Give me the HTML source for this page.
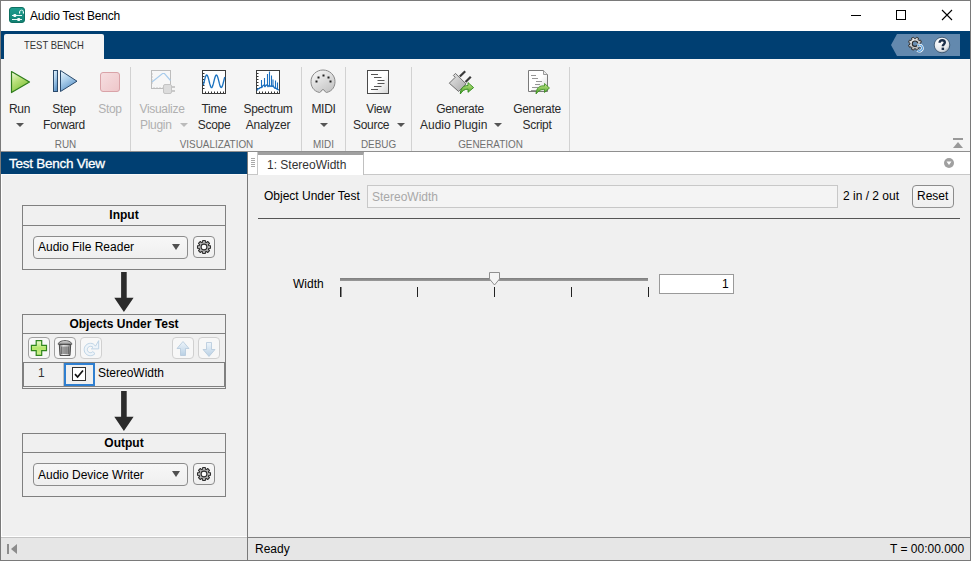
<!DOCTYPE html>
<html><head><meta charset="utf-8">
<style>
html,body{margin:0;padding:0;}
body{width:971px;height:561px;overflow:hidden;position:relative;background:#f0f0f0;font-family:"Liberation Sans",sans-serif;color:#000;}
.a{position:absolute;}
.t{position:absolute;white-space:nowrap;font-size:12px;line-height:14px;}
.c{text-align:center;}
.rb{font-size:12px;letter-spacing:-0.3px;color:#2a2a2a;}
.gl{font-size:11px;transform:scaleX(0.9);transform-origin:50% 0;color:#707070;}
.dis{color:#b0b0b0;}
.sep{position:absolute;top:67px;width:1px;height:84px;background:#d2d2d2;}
.dd{position:absolute;width:0;height:0;border-left:4px solid transparent;border-right:4px solid transparent;border-top:4.5px solid #555;}
</style></head>
<body>
<!-- window frame -->
<div class="a" style="left:0;top:0;width:971px;height:31px;background:#fff;"></div>
<!-- title -->
<div class="a" style="left:9px;top:7px;width:16px;height:16px;">
<svg width="16" height="16" viewBox="0 0 16 16"><defs><linearGradient id="tg" x1="0" y1="0" x2="0" y2="1"><stop offset="0" stop-color="#1e9e8f"/><stop offset="1" stop-color="#128173"/></linearGradient></defs>
<rect x="0.5" y="0.5" width="15" height="15" rx="2.5" fill="url(#tg)" stroke="#0f7062"/>
<path d="M3 8.5H13M3 12.5H13" stroke="#e8f7f4" stroke-width="1"/>
<rect x="4.3" y="7" width="3" height="3" rx="1" fill="#f2fbf9"/><rect x="8.2" y="11" width="3" height="3" rx="1" fill="#f2fbf9"/>
<path d="M10.6 6V5a1.9 1.9 0 0 1 3.8 0V6" stroke="#e8f7f4" stroke-width="0.9" fill="none"/>
<rect x="10" y="4.8" width="1.1" height="1.8" fill="#f2fbf9"/><rect x="13.9" y="4.8" width="1.1" height="1.8" fill="#f2fbf9"/>
</svg></div>
<div class="t" style="left:30px;top:9px;font-size:12px;letter-spacing:-0.2px;color:#000;">Audio Test Bench</div>
<!-- window controls -->
<div class="a" style="left:851px;top:15px;width:10px;height:1px;background:#000;"></div>
<div class="a" style="left:896px;top:10px;width:8px;height:8px;border:1px solid #000;"></div>
<svg class="a" style="left:941px;top:9px;" width="12" height="12" viewBox="0 0 12 12"><path d="M1 1L11 11M11 1L1 11" stroke="#000" stroke-width="1.1"/></svg>

<!-- toolstrip tab band -->
<div class="a" style="left:0;top:31px;width:971px;height:28px;background:#003f72;"></div>
<div class="a" style="left:4px;top:34px;width:100px;height:25px;background:#f5f5f5;border-radius:2px 2px 0 0;"></div>
<div class="t" style="left:24px;top:38px;font-size:11px;color:#333;line-height:14px;transform:scaleX(0.86);transform-origin:0 0;">TEST BENCH</div>
<!-- quick access -->
<svg class="a" style="left:890px;top:34px;" width="71" height="22" viewBox="0 0 71 22"><path d="M7 0H70V22H7L1 11Z" fill="#6389ae"/></svg>
<svg class="a" style="left:905px;top:35px;" width="22" height="20" viewBox="0 0 22 20">
<defs><radialGradient id="gG" cx="0.4" cy="0.35" r="0.7"><stop offset="0" stop-color="#ffffff"/><stop offset="1" stop-color="#a0a0a0"/></radialGradient>
<radialGradient id="gH" cx="0.4" cy="0.3" r="0.75"><stop offset="0" stop-color="#ffffff"/><stop offset="0.7" stop-color="#e4e8ec"/><stop offset="1" stop-color="#9aa6b2"/></radialGradient></defs>
<path d="M14.98 9.16 L16.44 10.16 L15.58 12.22 L13.85 11.89 L13.19 12.55 L13.52 14.28 L11.46 15.14 L10.46 13.68 L9.54 13.68 L8.54 15.14 L6.48 14.28 L6.81 12.55 L6.15 11.89 L4.42 12.22 L3.56 10.16 L5.02 9.16 L5.02 8.24 L3.56 7.24 L4.42 5.18 L6.15 5.51 L6.81 4.85 L6.48 3.12 L8.54 2.26 L9.54 3.72 L10.46 3.72 L11.46 2.26 L13.52 3.12 L13.19 4.85 L13.85 5.51 L15.58 5.18 L16.44 7.24 L14.98 8.24Z" fill="url(#gG)" stroke="#333" stroke-width="1" stroke-linejoin="round"/>
<circle cx="10" cy="8.7" r="2.7" fill="#6a8db0" stroke="#2a2a2a" stroke-width="1.1"/>
<path d="M12.3 15.3a3 3 0 1 0 1.2-5" stroke="#fff" stroke-width="2.6" fill="none"/>
<path d="M12.3 15.3a3 3 0 1 0 1.2-5" stroke="#5aa0dc" stroke-width="1.3" fill="none"/>
<path d="M12.2 8.6L15.2 10.2L12.8 12.4Z" fill="#5aa0dc" stroke="#fff" stroke-width="0.5"/>
</svg>
<svg class="a" style="left:933px;top:36px;" width="18" height="18" viewBox="0 0 18 18">
<circle cx="9" cy="9" r="7.8" fill="url(#gH)" stroke="#2e4a66" stroke-width="0.8"/>
<path d="M6.6 6.8C6.6 5 7.7 4.2 9.2 4.2 10.8 4.2 11.8 5.1 11.8 6.5 11.8 8.3 9.8 8.3 9.8 10.2" stroke="#1c2f4a" stroke-width="2.4" fill="none"/>
<rect x="8.6" y="11.6" width="2.5" height="2.4" fill="#1c2f4a"/>
</svg>

<!-- ribbon -->
<div class="a" style="left:0;top:59px;width:971px;height:92px;background:#f5f5f5;"></div>
<div class="a" style="left:0;top:151px;width:971px;height:1px;background:#8f8f8f;"></div>

<!-- RUN group -->
<div class="t rb c" style="left:0px;width:39px;top:102px;">Run</div>
<div class="dd" style="left:16px;top:122.5px;"></div>
<div class="t rb c" style="left:34px;width:60px;top:102px;">Step</div>
<div class="t rb c" style="left:34px;width:60px;top:118px;">Forward</div>
<div class="t rb c dis" style="left:90px;width:40px;top:102px;">Stop</div>
<div class="t gl c" style="left:0px;width:131px;top:137px;">RUN</div>
<div class="sep" style="left:130px;"></div>

<!-- VISUALIZATION group -->
<div class="t rb c dis" style="left:132px;width:60px;top:102px;">Visualize</div>
<div class="t rb dis" style="left:140px;top:118px;">Plugin</div>
<div class="dd" style="left:180px;top:123px;border-top-color:#bbb;"></div>
<div class="t rb c" style="left:189px;width:50px;top:102px;">Time</div>
<div class="t rb c" style="left:189px;width:50px;top:118px;">Scope</div>
<div class="t rb c" style="left:238px;width:60px;top:102px;">Spectrum</div>
<div class="t rb c" style="left:238px;width:60px;top:118px;">Analyzer</div>
<div class="t gl c" style="left:131px;width:171px;top:137px;">VISUALIZATION</div>
<div class="sep" style="left:301px;"></div>

<!-- MIDI group -->
<div class="t rb c" style="left:302px;width:43px;top:102px;">MIDI</div>
<div class="dd" style="left:320px;top:123px;"></div>
<div class="t gl c" style="left:302px;width:43px;top:137px;">MIDI</div>
<div class="sep" style="left:345px;"></div>

<!-- DEBUG group -->
<div class="t rb c" style="left:346px;width:65px;top:102px;">View</div>
<div class="t rb" style="left:353px;top:118px;">Source</div>
<div class="dd" style="left:397px;top:123px;"></div>
<div class="t gl c" style="left:346px;width:65px;top:137px;">DEBUG</div>
<div class="sep" style="left:411px;"></div>

<!-- GENERATION group -->
<div class="t rb c" style="left:420px;width:80px;top:102px;">Generate</div>
<div class="t rb" style="left:420px;top:118px;letter-spacing:0;">Audio Plugin</div>
<div class="dd" style="left:494px;top:123px;"></div>
<div class="t rb c" style="left:505px;width:64px;top:102px;">Generate</div>
<div class="t rb c" style="left:505px;width:64px;top:118px;">Script</div>
<div class="t gl c" style="left:412px;width:157px;top:137px;">GENERATION</div>
<div class="sep" style="left:569px;"></div>


<!-- ribbon icons -->
<svg class="a" style="left:0;top:59px;" width="600" height="40" viewBox="0 59 600 40">
<defs>
<linearGradient id="gRun" x1="0" y1="0" x2="0.6" y2="1"><stop offset="0" stop-color="#f4fbe6"/><stop offset="0.45" stop-color="#b9e07a"/><stop offset="1" stop-color="#7cc034"/></linearGradient>
<linearGradient id="gStep" x1="0" y1="0" x2="0.5" y2="1"><stop offset="0" stop-color="#eef7fd"/><stop offset="0.5" stop-color="#a9cdea"/><stop offset="1" stop-color="#5d94c8"/></linearGradient>
<linearGradient id="gStop" x1="0" y1="0" x2="1" y2="1"><stop offset="0" stop-color="#f6dfe1"/><stop offset="1" stop-color="#eec6c9"/></linearGradient>
<linearGradient id="gMidi" x1="0" y1="0" x2="0.7" y2="1"><stop offset="0" stop-color="#fafafa"/><stop offset="1" stop-color="#c6c6c6"/></linearGradient>
<linearGradient id="gDoc" x1="0" y1="0" x2="1" y2="1"><stop offset="0.5" stop-color="#ffffff"/><stop offset="1" stop-color="#d4d4d4"/></linearGradient>
<linearGradient id="gPlug" x1="0" y1="0" x2="1" y2="1"><stop offset="0" stop-color="#e8e8e8"/><stop offset="1" stop-color="#a8a8a8"/></linearGradient>
<linearGradient id="gArr" x1="0" y1="0" x2="0" y2="1"><stop offset="0" stop-color="#c9ec8c"/><stop offset="1" stop-color="#3f9a1f"/></linearGradient>
</defs>
<!-- Run -->
<path d="M11.5 71.5L29.5 82L11.5 92.5Z" fill="url(#gRun)" stroke="#2f7d1c" stroke-width="1.2" stroke-linejoin="round"/>
<!-- Step forward -->
<rect x="53.5" y="70.5" width="4" height="21" fill="url(#gStep)" stroke="#2b4a6b" stroke-width="1"/>
<path d="M60.5 70.5L77 81.2L60.5 91.5Z" fill="url(#gStep)" stroke="#2b4a6b" stroke-width="1" stroke-linejoin="round"/>
<!-- Stop -->
<rect x="100.5" y="72.5" width="19" height="19" rx="2.5" fill="url(#gStop)" stroke="#d9a3a8"/>
<!-- Visualize plugin (disabled) -->
<rect x="151.5" y="70.5" width="19" height="18" fill="#f7f7f7" stroke="#bdbdbd"/>
<path d="M152 82 L162.5 73.5 L164.5 73.5 L170.5 80.5" stroke="#a8ccec" stroke-width="1.2" fill="none"/>
<path d="M152 74h1M152 77h1M152 80h1M152 83h1M154 88v-1M157 88v-1M160 88v-1M163 88v-1" stroke="#c8c8c8"/>
<rect x="163.5" y="84.5" width="8" height="9" rx="1.5" fill="#dcdcdc" stroke="#c4c4c4"/>
<path d="M172 87h3M172 91h3" stroke="#bcbcbc" stroke-width="1.5"/>
<!-- Time scope -->
<rect x="202.5" y="70.5" width="23" height="23" fill="#fff" stroke="#3c3c3c" stroke-width="1"/>
<path d="M203 73.5h1.5M203 76.5h1.5M203 79.5h1.5M203 82.5h1.5M203 85.5h1.5M203 88.5h1.5M205.5 93v-1.5M208.5 93v-1.5M211.5 93v-1.5M214.5 93v-1.5M217.5 93v-1.5M220.5 93v-1.5M223.5 93v-1.5" stroke="#333" stroke-width="1"/>
<path d="M203.30 84.95 L203.80 83.14 L204.30 81.13 L204.80 79.13 L205.30 77.35 L205.80 75.98 L206.30 75.16 L206.80 74.96 L207.30 75.43 L207.80 76.50 L208.30 78.06 L208.80 79.95 L209.30 81.98 L209.80 83.94 L210.30 85.61 L210.80 86.83 L211.30 87.47 L211.80 87.46 L212.30 86.81 L212.80 85.58 L213.30 83.90 L213.80 81.94 L214.30 79.91 L214.80 78.02 L215.30 76.47 L215.80 75.41 L216.30 74.96 L216.80 75.17 L217.30 76.00 L217.80 77.38 L218.30 79.17 L218.80 81.17 L219.30 83.18 L219.80 84.99 L220.30 86.41 L220.80 87.29 L221.30 87.55 L221.80 87.15 L222.30 86.14 L222.80 84.62 L223.30 82.75 L223.80 80.72 L224.30 78.75 L224.80 77.04" stroke="#1b73c0" stroke-width="1.35" fill="none"/>
<!-- Spectrum -->
<rect x="256.5" y="70.5" width="23" height="23" fill="#fff" stroke="#3c3c3c" stroke-width="1"/>
<path d="M257 73.5h1.5M257 76.5h1.5M257 79.5h1.5M257 82.5h1.5M257 85.5h1.5M257 88.5h1.5M259.5 93v-1.5M262.5 93v-1.5M265.5 93v-1.5M268.5 93v-1.5M271.5 93v-1.5M274.5 93v-1.5M277.5 93v-1.5" stroke="#333" stroke-width="1"/>
<path d="M257.3 90.5 L258.0 88.6 L259.0 88.7 L260.0 87.7 L261.0 87.7 L262.0 87.3 L263.0 85.5 L264.0 85.0 L265.0 86.7 L266.0 85.1 L267.0 84.9 L268.0 86.7 L269.0 85.5 L270.0 86.5 L271.0 85.8 L272.0 86.5 L273.0 85.7 L274.0 87.3 L275.0 88.3 L276.0 88.1 L277.0 89.2 L278.0 89.6 L279 90" stroke="#1b6fbf" stroke-width="1.3" fill="none" stroke-linejoin="round"/>
<path d="M261.5 87.7V80M264.5 86.5V78M267.5 86.0V74M269.5 86.1V71.5M271.5 86.5V75.5M273 87.0V79.5M275.5 88.0V80.5M277.5 89.0V82.5" stroke="#1b6fbf" stroke-width="1.1" fill="none"/>
<!-- MIDI -->
<path d="M319.5 92.5 C313 91, 311 86, 311 81.5 C311 75, 316.5 70, 323 70 C329.5 70, 335 75, 335 81.5 C335 86, 333 91, 326.5 92.5 C325 92.5, 324.5 89.5, 323 89.5 C321.5 89.5, 321 92.5, 319.5 92.5Z" fill="url(#gMidi)" stroke="#8a8a8a" stroke-width="1"/>
<rect x="315.5" y="80.5" width="2" height="2" fill="#222"/><rect x="317.5" y="76.5" width="2" height="2" fill="#222"/><rect x="322.5" y="74.5" width="2" height="2" fill="#222"/><rect x="327.5" y="76.5" width="2" height="2" fill="#222"/><rect x="329.5" y="80.5" width="2" height="2" fill="#222"/>
<!-- View source -->
<rect x="367.5" y="70.5" width="21" height="23" fill="url(#gDoc)" stroke="#4a4a4a"/>
<path d="M371 74.5h7M374 77.5h7.5M377.5 80.5h7M377.5 83.5h7M374 86.5h7.5M371 89.5h7" stroke="#555" stroke-width="1"/>
<!-- Generate audio plugin -->
<path d="M459.8 76.5 L465.2 71.2" stroke="#3a3a3a" stroke-width="2.2"/>
<path d="M465.5 82 L470.8 76.7" stroke="#3a3a3a" stroke-width="2.2"/>
<path d="M449.3 83.2 L455.2 77.3 L453.4 75.5 L455.5 73.4 L466 83.9 L458.6 91.5 Z" fill="url(#gPlug)" stroke="#6f6f6f" stroke-width="1"/>
<path d="M460.3 94 C460.3 88.5, 463.5 85.2, 468 85.6 L468 82.6 L473.6 87.6 L468 92.3 L468 89.2 C464.8 89, 462.3 90.8, 460.3 94Z" fill="url(#gArr)" stroke="#2f8a1a" stroke-width="0.9"/>
<!-- Generate script -->
<path d="M528.5 70.5H543.5L547.5 74.5V91.5H528.5Z" fill="url(#gDoc)" stroke="#7a7a7a"/>
<path d="M543.5 70.5V74.5H547.5" fill="#e8e8e8" stroke="#9a9a9a"/>
<path d="M531 75.5h5M532 78.5h6M536 81.5h6M535 84.5h5M532 87.5h6M531 90.5h5" stroke="#8a8a8a" stroke-width="0.9"/>
<path d="M536 94 C536 88, 540 85, 544.5 86 L544.5 83.5 L549.5 88 L544.5 92.5 L544.5 89.5 C541 89, 538.5 91, 536 94Z" fill="url(#gArr)" stroke="#3b8a1f" stroke-width="0.8"/>
</svg>

<!-- collapse -->
<div class="a" style="left:953px;top:138px;width:10px;height:2px;background:#999;"></div>
<div class="a" style="left:953px;top:142px;width:0;height:0;border-left:5px solid transparent;border-right:5px solid transparent;border-bottom:6px solid #999;"></div>

<!-- left panel -->
<div class="a" style="left:0;top:152px;width:247px;height:22px;background:#003f72;"></div>
<div class="t" style="left:9px;top:155.5px;font-size:13.5px;-webkit-text-stroke:0.3px #fff;letter-spacing:-0.25px;line-height:16px;color:#fff;">Test Bench View</div>
<div class="a" style="left:247px;top:152px;width:1px;height:408px;background:#7a7a7a;"></div>

<div class="a" style="left:1px;top:174px;width:1px;height:363px;background:#fff;"></div>
<div class="a" style="left:1px;top:174px;width:246px;height:1px;background:#fafafa;"></div>
<div class="a" style="left:1px;top:536px;width:246px;height:1px;background:#fff;"></div>
<!-- tab strip -->
<div class="a" style="left:248px;top:152px;width:722px;height:22px;background:#fff;border-bottom:1px solid #c8c8c8;"></div>
<div class="a" style="left:258px;top:152px;width:106px;height:23px;background:#fff;border-top:3px solid #a0a0a0;box-sizing:border-box;border-right:1px solid #c0c0c0;"></div>
<div class="t" style="left:267px;top:158px;color:#333;">1: StereoWidth</div>


<!-- grip -->
<div class="a" style="left:251px;top:158px;width:4px;height:9px;background:repeating-linear-gradient(#a8a8a8 0 1px,transparent 1px 2px);"></div>
<div class="a" style="left:257px;top:152px;width:1px;height:22px;background:#c8c8c8;"></div>
<!-- tab dropdown circle -->
<svg class="a" style="left:943px;top:157px;" width="12" height="12" viewBox="0 0 12 12"><circle cx="6" cy="6" r="5" fill="#a0a0a0"/><path d="M3.5 4.4H8.5L6 8Z" fill="#fff"/></svg>

<!-- Input box -->
<div class="a" style="left:22px;top:205px;width:202px;height:63px;border:1px solid #808080;"></div>
<div class="a" style="left:23px;top:225px;width:202px;height:1px;background:#808080;"></div>
<div class="t c" style="left:23px;width:202px;top:208px;font-weight:bold;">Input</div>
<div class="a" style="left:33px;top:236px;width:153px;height:21px;border:1px solid #8c8c8c;border-radius:4px;background:linear-gradient(#f7f7f7,#efefef);"></div>
<div class="t" style="left:38px;top:240px;">Audio File Reader</div>
<div class="dd" style="left:172px;top:244px;border-left-width:4px;border-right-width:4px;border-top-width:6px;border-top-color:#505050;"></div>
<div class="a" style="left:193px;top:236px;width:20px;height:20px;border:1px solid #8c8c8c;border-radius:4px;background:linear-gradient(#f7f7f7,#efefef);"></div>
<svg class="a" style="left:196px;top:239px;" width="16" height="16" viewBox="0 0 16 16"><path d="M12.78 6.52 L14.47 6.69 L14.47 9.31 L12.78 9.48 L12.42 10.33 L13.50 11.65 L11.65 13.50 L10.33 12.42 L9.48 12.78 L9.31 14.47 L6.69 14.47 L6.52 12.78 L5.67 12.42 L4.35 13.50 L2.50 11.65 L3.58 10.33 L3.22 9.48 L1.53 9.31 L1.53 6.69 L3.22 6.52 L3.58 5.67 L2.50 4.35 L4.35 2.50 L5.67 3.58 L6.52 3.22 L6.69 1.53 L9.31 1.53 L9.48 3.22 L10.33 3.58 L11.65 2.50 L13.50 4.35 L12.42 5.67Z" fill="#b4b4b4" stroke="#2e2e2e" stroke-width="1.1" stroke-linejoin="round"/><circle cx="8" cy="8" r="2.9" fill="#fff" stroke="#2e2e2e" stroke-width="1.1"/></svg>

<!-- arrow 1 -->
<svg class="a" style="left:110px;top:272px;" width="28" height="44" viewBox="0 0 28 44"><path d="M11.1 0H16.7V25.8H23.6L13.9 39.9L4.3 25.8H11.1Z" fill="#2b2b2b"/></svg>

<!-- Objects under test -->
<div class="a" style="left:22px;top:314px;width:202px;height:73px;border:1px solid #808080;"></div>
<div class="a" style="left:23px;top:333px;width:202px;height:1px;background:#808080;"></div>
<div class="t c" style="left:23px;width:202px;top:317px;font-weight:bold;">Objects Under Test</div>
<div class="a" style="left:28px;top:337px;width:20px;height:20px;border:1px solid #a0a0a0;border-radius:4px;background:#f7f7f7;"></div>
<svg class="a" style="left:29px;top:339px;" width="20" height="20" viewBox="0 0 20 20"><defs><linearGradient id="gPlus" x1="0" y1="0" x2="0" y2="1"><stop offset="0" stop-color="#f2fbd8"/><stop offset="0.5" stop-color="#b4e66a"/><stop offset="1" stop-color="#d0f090"/></linearGradient></defs><path d="M7.2 1.6H12.7V6.4H17.5V11.6H12.7V16.4H7.2V11.6H2.4V6.4H7.2Z" fill="url(#gPlus)" stroke="#2f861c" stroke-width="1.2"/></svg>
<div class="a" style="left:54px;top:337px;width:20px;height:20px;border:1px solid #a0a0a0;border-radius:4px;background:#f7f7f7;"></div>
<svg class="a" style="left:55px;top:339px;" width="20" height="20" viewBox="0 0 20 20"><defs><linearGradient id="gTr" x1="0" y1="0" x2="1" y2="0"><stop offset="0" stop-color="#7a7a7a"/><stop offset="0.35" stop-color="#f4f4f4"/><stop offset="0.7" stop-color="#cfcfcf"/><stop offset="1" stop-color="#6a6a6a"/></linearGradient><linearGradient id="gLid" x1="0" y1="0" x2="0" y2="1"><stop offset="0" stop-color="#e8e8e8"/><stop offset="1" stop-color="#8a8a8a"/></linearGradient></defs>
<path d="M3.2 5.3C3.2 3.4 6 1.6 10 1.6S16.8 3.4 16.8 5.3Z" fill="url(#gLid)" stroke="#4a4a4a" stroke-width="0.9"/>
<path d="M4.3 5.6L5 16.5H15L15.7 5.6Z" fill="url(#gTr)" stroke="#3f3f3f" stroke-width="0.9"/>
<path d="M6.9 7.5V15M9 7.5V15M11 7.5V15M13.1 7.5V15" stroke="#444" stroke-width="1"/></svg>
<div class="a" style="left:80px;top:337px;width:20px;height:20px;border:1px solid #d0d0d0;border-radius:4px;background:#f7f7f7;"></div>
<svg class="a" style="left:81px;top:339px;" width="20" height="20" viewBox="0 0 20 20"><path d="M14.5 7.2 C13.3 5.2, 11.6 4.3, 9.6 4.3 C5.9 4.3, 3.2 7.1, 3.2 10.6 C3.2 14.1, 5.9 16.7, 9.4 16.7 C11.3 16.7, 12.8 15.9, 14 14.6 L11.8 12.6 C11.2 13.3, 10.4 13.7, 9.5 13.7 C7.7 13.7, 6.3 12.3, 6.3 10.5 C6.3 8.7, 7.7 7.3, 9.6 7.3 C10.6 7.3, 11.5 7.7, 12 8.3 L10.4 9.9 H17.7 V1.6 Z" fill="#eef4f9" stroke="#b9d0e3" stroke-width="0.9" stroke-linejoin="round"/></svg>
<div class="a" style="left:172px;top:337px;width:20px;height:20px;border:1px solid #d0d0d0;border-radius:4px;background:#f7f7f7;"></div>
<svg class="a" style="left:173px;top:339px;" width="20" height="20" viewBox="0 0 20 20"><defs><linearGradient id="gUp" x1="0" y1="0" x2="0" y2="1"><stop offset="0" stop-color="#eef5fb"/><stop offset="1" stop-color="#b9d0e4"/></linearGradient></defs><path d="M10 2.5L16 9.5H12.5V16.5H7.5V9.5H4Z" fill="url(#gUp)" stroke="#b4c8da" stroke-width="0.8"/></svg>
<div class="a" style="left:198px;top:337px;width:20px;height:20px;border:1px solid #d0d0d0;border-radius:4px;background:#f7f7f7;"></div>
<svg class="a" style="left:199px;top:339px;" width="20" height="20" viewBox="0 0 20 20"><path d="M10 17.5L16 10.5H12.5V3.5H7.5V10.5H4Z" fill="url(#gUp)" stroke="#b4c8da" stroke-width="0.8"/></svg>
<!-- table -->
<div class="a" style="left:23px;top:362px;width:200px;height:23px;border:1px solid #808080;border-right:2px solid #808080;background:#f0f0f0;"></div>
<div class="a" style="left:63px;top:363px;width:1px;height:23px;background:#c0c0c0;"></div>
<div class="t" style="left:38px;top:366px;color:#333;">1</div>
<div class="a" style="left:64px;top:363px;width:27px;height:19px;border:2px solid #2f7fd0;"></div>
<div class="a" style="left:72px;top:367px;width:14px;height:14px;border:1px solid #333;background:#fff;box-sizing:border-box;"></div>
<svg class="a" style="left:72px;top:367px;" width="14" height="14" viewBox="0 0 14 14"><path d="M3 7.2L5.6 10L11 3.5" stroke="#111" stroke-width="1.7" fill="none"/></svg>
<div class="t" style="left:98px;top:366px;">StereoWidth</div>

<!-- arrow 2 -->
<svg class="a" style="left:110px;top:391px;" width="28" height="44" viewBox="0 0 28 44"><path d="M11.1 0H16.7V25.8H23.6L13.9 39.9L4.3 25.8H11.1Z" fill="#2b2b2b"/></svg>

<!-- Output box -->
<div class="a" style="left:22px;top:433px;width:202px;height:62px;border:1px solid #808080;"></div>
<div class="a" style="left:23px;top:452px;width:202px;height:1px;background:#808080;"></div>
<div class="t c" style="left:23px;width:202px;top:436px;font-weight:bold;">Output</div>
<div class="a" style="left:33px;top:463px;width:153px;height:21px;border:1px solid #8c8c8c;border-radius:4px;background:linear-gradient(#f7f7f7,#efefef);"></div>
<div class="t" style="left:38px;top:468px;">Audio Device Writer</div>
<div class="dd" style="left:172px;top:471px;border-left-width:4px;border-right-width:4px;border-top-width:6px;border-top-color:#505050;"></div>
<div class="a" style="left:193px;top:463px;width:20px;height:20px;border:1px solid #8c8c8c;border-radius:4px;background:linear-gradient(#f7f7f7,#efefef);"></div>
<svg class="a" style="left:196px;top:466px;" width="16" height="16" viewBox="0 0 16 16"><path d="M12.78 6.52 L14.47 6.69 L14.47 9.31 L12.78 9.48 L12.42 10.33 L13.50 11.65 L11.65 13.50 L10.33 12.42 L9.48 12.78 L9.31 14.47 L6.69 14.47 L6.52 12.78 L5.67 12.42 L4.35 13.50 L2.50 11.65 L3.58 10.33 L3.22 9.48 L1.53 9.31 L1.53 6.69 L3.22 6.52 L3.58 5.67 L2.50 4.35 L4.35 2.50 L5.67 3.58 L6.52 3.22 L6.69 1.53 L9.31 1.53 L9.48 3.22 L10.33 3.58 L11.65 2.50 L13.50 4.35 L12.42 5.67Z" fill="#b4b4b4" stroke="#2e2e2e" stroke-width="1.1" stroke-linejoin="round"/><circle cx="8" cy="8" r="2.9" fill="#fff" stroke="#2e2e2e" stroke-width="1.1"/></svg>


<!-- main content -->
<div class="t" style="left:264px;top:189px;">Object Under Test</div>
<div class="a" style="left:367px;top:185px;width:469px;height:21px;border:1px solid #c8c8c8;background:#f4f4f4;"></div>
<div class="t" style="left:372px;top:190px;color:#a8a8a8;">StereoWidth</div>
<div class="t" style="left:843px;top:189px;">2 in / 2 out</div>
<div class="a" style="left:912px;top:185px;width:40px;height:21px;border:1px solid #8c8c8c;border-radius:4px;background:linear-gradient(#f7f7f7,#efefef);"></div>
<div class="t" style="left:917px;top:189px;">Reset</div>
<div class="a" style="left:258px;top:218px;width:702px;height:1px;background:#555;"></div>

<!-- slider -->
<div class="t" style="left:293px;top:277px;">Width</div>
<div class="a" style="left:340px;top:278px;width:308px;height:3px;background:linear-gradient(#7d7d7d,#9a9a9a);"></div>
<div class="a" style="left:340px;top:287px;width:2px;height:10px;background:linear-gradient(90deg,#222 50%,#888 50%);"></div>
<div class="a" style="left:417px;top:287px;width:1px;height:10px;background:#222;"></div>
<div class="a" style="left:494px;top:287px;width:1px;height:10px;background:#222;"></div>
<div class="a" style="left:571px;top:287px;width:1px;height:10px;background:#222;"></div>
<div class="a" style="left:648px;top:287px;width:1px;height:10px;background:#222;"></div>
<svg class="a" style="left:488px;top:271px;" width="14" height="16" viewBox="0 0 14 16"><path d="M1.5 1.5H11.5V8L6.5 14L1.5 8Z" fill="#f4f4f4" stroke="#8f8f8f" stroke-width="1"/></svg>
<div class="a" style="left:659px;top:274px;width:73px;height:18px;border:1px solid #9a9a9a;background:#fff;"></div>
<div class="t" style="left:722px;top:277px;">1</div>

<!-- status bar -->
<div class="a" style="left:0;top:537px;width:247px;height:1px;background:#c4c4c4;"></div><div class="a" style="left:247px;top:537px;width:724px;height:1px;background:#808080;"></div>
<div class="a" style="left:0;top:538px;width:971px;height:22px;background:#e6e6e6;"></div>
<div class="a" style="left:247px;top:537px;width:1px;height:23px;background:#7a7a7a;"></div>
<div class="t" style="left:255px;top:542px;color:#000;">Ready</div>
<div class="t" style="left:890px;top:542px;color:#000;">T = 00:00.000</div>

<!-- status left icon -->
<div class="a" style="left:7px;top:544px;width:2px;height:10px;background:#8c8c8c;"></div>
<div class="a" style="left:11px;top:544px;width:0;height:0;border-top:5px solid transparent;border-bottom:5px solid transparent;border-right:6px solid #8c8c8c;"></div>

<!-- borders -->
<div class="a" style="left:0;top:0;width:971px;height:1px;background:#7a7a7a;"></div>
<div class="a" style="left:0;top:0;width:1px;height:561px;background:#7a7a7a;"></div>
<div class="a" style="left:970px;top:0;width:1px;height:561px;background:#7a7a7a;"></div>
<div class="a" style="left:0;top:560px;width:971px;height:1px;background:#7a7a7a;"></div>
</body></html>
